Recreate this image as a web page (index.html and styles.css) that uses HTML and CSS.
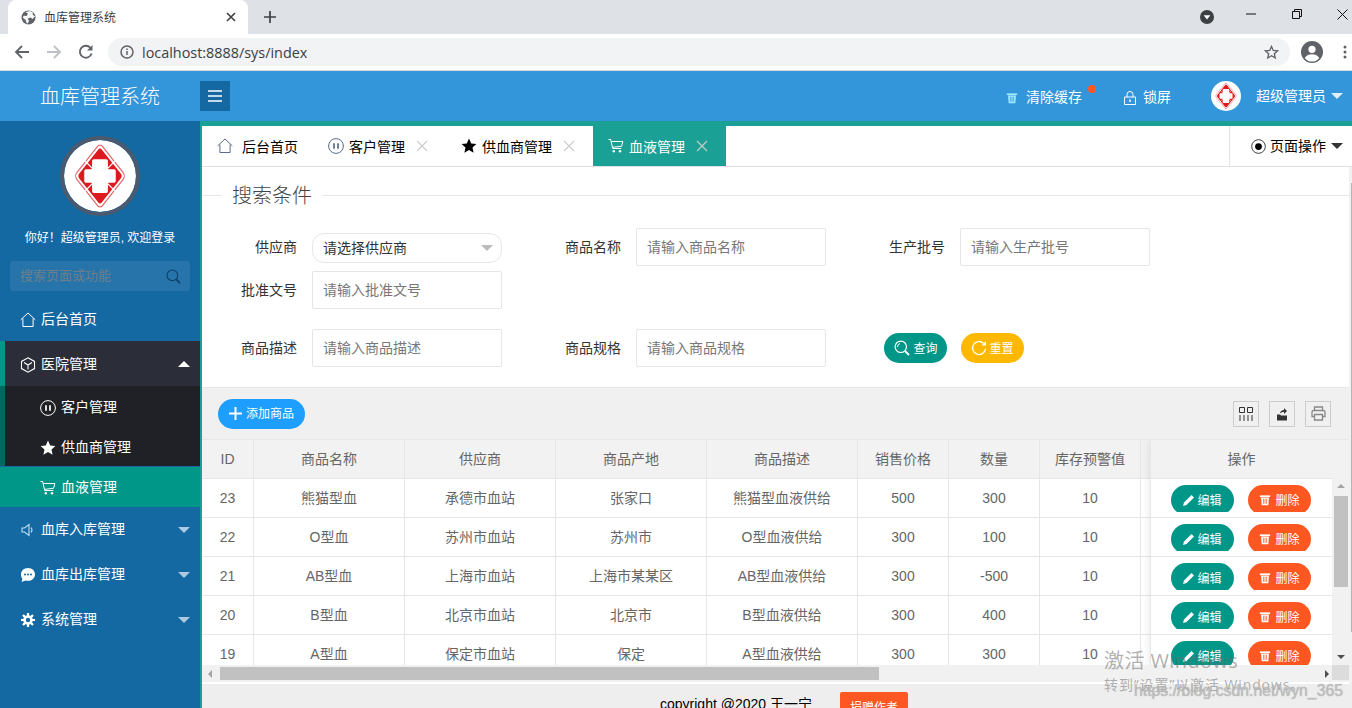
FILE: index.html
```html
<!DOCTYPE html>
<html lang="zh-CN">
<head>
<meta charset="utf-8">
<title>血库管理系统</title>
<link rel="stylesheet" href="styles.css">
</head>
<body>
<svg class="defs" width="0" height="0" aria-hidden="true">
  <symbol id="i-home" viewBox="0 0 16 16"><path d="M.7 7.800 8 1l7.300 6.800M2.900 6.500v8h10.200v-8" fill="none" stroke="currentColor" stroke-width="1"/></symbol>
  <symbol id="i-pause" viewBox="0 0 16 16"><circle cx="8" cy="8" r="7.400" fill="none" stroke="currentColor" stroke-width="1"/><path d="M6 5.200v5.600M10 5.200v5.600" stroke="currentColor" stroke-width="1.700"/></symbol>
  <symbol id="i-star" viewBox="0 0 16 16"><path d="M8 .6l2.200 4.800 5.200.6-3.900 3.500 1.100 5.200L8 12.100l-4.600 2.600 1.100-5.200L.6 6l5.200-.6z" fill="currentColor"/></symbol>
  <symbol id="i-cart" viewBox="0 0 16 16"><path d="M.5 1.500h2.200l2 9h8.600M3.400 3.500h11.400l-1.200 4.800-8.800 1" fill="none" stroke="currentColor" stroke-width="1"/><circle cx="5.800" cy="13.300" r="1.200" fill="currentColor"/><circle cx="12" cy="13.300" r="1.200" fill="currentColor"/></symbol>
  <symbol id="i-close" viewBox="0 0 12 12"><path d="M1 1l10 10M11 1 1 11" stroke="currentColor" stroke-width="1.100"/></symbol>
  <symbol id="i-trash" viewBox="0 0 14 14"><path d="M1 2.600h12" stroke="currentColor" stroke-width="2"/><path d="M2.400 4h9.200l-.7 9H3.100z" fill="currentColor"/><path d="M5.200 5.500v6M7 5.500v6M8.800 5.500v6" stroke="var(--stripe, #fff)" stroke-width=".8"/></symbol>
  <symbol id="i-search" viewBox="0 0 16 16"><circle cx="6.800" cy="6.800" r="5.700" fill="none" stroke="currentColor" stroke-width="1.200"/><path d="M11 11l4 4" stroke="currentColor" stroke-width="1.800"/></symbol>
  <symbol id="i-edit" viewBox="0 0 12 12"><path d="M0 12l1-3.500L8.500 1 11 3.500 3.500 11z" fill="currentColor"/></symbol>
  <symbol id="i-logo" viewBox="0 0 64 64">
    <circle cx="32" cy="32" r="32" fill="#fff"/>
    <g transform="translate(32 32) scale(.79 1) rotate(45)">
      <rect x="-20.500" y="-20.500" width="41" height="41" rx="4" fill="#fff" stroke="#e8666a" stroke-width="1.200"/>
      <rect x="-18" y="-18" width="36" height="36" rx="3" fill="#dc1a1f"/>
    </g>
    <path d="M18 18l8 8M46 18l-8 8M18 46l8-8M46 46l-8-8" stroke="#fff" stroke-width="1"/>
    <path d="M26.500 17h11a1.500 1.500 0 0 1 1.500 1.500V26h5.500a1.500 1.500 0 0 1 1.500 1.500v9a1.500 1.500 0 0 1-1.500 1.500H39v7.500a1.500 1.500 0 0 1-1.500 1.500h-11a1.500 1.500 0 0 1-1.500-1.500V38h-5.500a1.500 1.500 0 0 1-1.500-1.500v-9a1.500 1.500 0 0 1 1.500-1.500H25v-7.500a1.500 1.500 0 0 1 1.500-1.500z" fill="#fff"/>
  </symbol>
</svg>

<div class="page">
  <div class="browser">
    <div class="tabstrip">
      <div class="btab">
        <svg class="globe" width="15" height="15" viewBox="0 0 16 16"><circle cx="8" cy="8" r="7.500" fill="#5f6368"/><path d="M5 2.200 7.400 4 6 6.400 3 6.200 1.800 8 5 10.600l1 3.600h1.500l1-3-1.600-2L10 8l2.500 1.600 2.400-3L12.500 5l.3-2L10 1z" fill="#fff" opacity=".95"/></svg>
        <span class="btab-title">血库管理系统</span>
        <svg class="btab-x" width="10" height="10" viewBox="0 0 10 10"><path d="M1 1l8 8M9 1 1 9" stroke="#3c4043" stroke-width="1.600"/></svg>
      </div>
      <svg class="newtab" width="12" height="12" viewBox="0 0 12 12"><path d="M6 0v12M0 6h12" stroke="#3c4043" stroke-width="1.700"/></svg>
      <div class="winbtns">
        <svg class="dl" width="14" height="14" viewBox="0 0 14 14"><circle cx="7" cy="7" r="7" fill="#3c4043"/><path d="M3.600 5.300h6.800L7 9.600z" fill="#fff"/></svg>
        <svg class="wmin" width="10" height="2" viewBox="0 0 10 2"><path d="M0 1h10" stroke="#111" stroke-width="1"/></svg>
        <svg class="wmax" width="10" height="10" viewBox="0 0 10 10"><path d="M.5 2.500h7v7h-7zM2.500 2.500v-2h7v7h-2" fill="none" stroke="#111" stroke-width="1"/></svg>
        <svg class="wclose" width="11" height="11" viewBox="0 0 11 11"><path d="M.5.500l10 10M10.500.500l-10 10" stroke="#111" stroke-width="1"/></svg>
      </div>
    </div>
    <div class="toolbar">
      <svg class="nav" width="16" height="16" viewBox="0 0 16 16"><path d="M15 8H2M8 2 2 8l6 6" fill="none" stroke="#5f6368" stroke-width="1.800"/></svg>
      <svg class="nav" width="16" height="16" viewBox="0 0 16 16"><path d="M1 8h13M8 2l6 6-6 6" fill="none" stroke="#bdc1c6" stroke-width="1.800"/></svg>
      <svg class="nav" width="16" height="16" viewBox="0 0 16 16"><path d="M13.600 9.500A6 6 0 1 1 12.300 3.700" fill="none" stroke="#5f6368" stroke-width="1.800"/><path d="M14.500 1v5.500H9z" fill="#5f6368"/></svg>
      <div class="omnibox">
        <svg width="14" height="14" viewBox="0 0 14 14"><circle cx="7" cy="7" r="6" fill="none" stroke="#5f6368" stroke-width="1.500"/><path d="M7 6v4M7 3.500v1.500" stroke="#5f6368" stroke-width="1.500"/></svg>
        <span class="url">localhost:8888/sys/index</span>
        <svg class="bstar" width="15" height="15" viewBox="0 0 16 16"><path d="M8 1.500l1.900 4.300 4.600.4-3.500 3.100 1 4.600L8 11.500l-4 2.400 1-4.600L1.500 6.200l4.600-.4z" fill="none" stroke="#5f6368" stroke-width="1.400"/></svg>
      </div>
      <svg class="acct" width="22" height="22" viewBox="0 0 22 22"><circle cx="11" cy="11" r="11" fill="#5f6368"/><circle cx="11" cy="8.300" r="3.600" fill="#fff"/><path d="M3.800 17c1.500-2.800 4.500-3.800 7.200-3.800s5.700 1 7.200 3.800a9 9 0 0 1-14.400 0z" fill="#fff"/></svg>
      <svg class="kebab" width="4" height="14" viewBox="0 0 4 14"><circle cx="2" cy="2" r="1.500" fill="#5f6368"/><circle cx="2" cy="7" r="1.500" fill="#5f6368"/><circle cx="2" cy="12" r="1.500" fill="#5f6368"/></svg>
    </div>
  </div>

  <header class="topbar">
    <div class="brand">血库管理系统</div>
    <button class="burger"><svg width="14" height="12" viewBox="0 0 14 12"><path d="M0 1h14M0 6h14M0 11h14" stroke="#fff" stroke-width="1.700"/></svg></button>
    <div class="top-right">
      <span class="top-item cache"><svg width="12" height="12" class="c-cyan"><use href="#i-trash"/></svg>清除缓存<i class="dot"></i></span>
      <span class="top-item lock"><svg width="12" height="14" viewBox="0 0 12 14"><path d="M.5 6h11v7.500H.5zM3 6V3.500a3 3 0 0 1 6 0V6" fill="none" stroke="#fff" stroke-width="1"/><path d="M6 8.500v2.500" stroke="#fff" stroke-width="1.500"/></svg>锁屏</span>
      <svg class="avatar" width="30" height="30"><use href="#i-logo"/></svg>
      <span class="admin">超级管理员<i class="tri tri-down white"></i></span>
    </div>
  </header>

  <div class="body">
    <aside class="sidebar">
      <svg class="side-logo" width="72" height="72"><use href="#i-logo"/></svg>
      <p class="hello">你好！超级管理员, 欢迎登录</p>
      <div class="side-search"><span>搜索页面或功能</span><svg width="15" height="15" class="c-navy"><use href="#i-search"/></svg></div>
      <nav class="menu">
        <a class="mi home"><svg width="16" height="16"><use href="#i-home"/></svg>后台首页</a>
        <a class="mi open"><svg width="16" height="16" viewBox="0 0 16 16"><path d="M8 .8 14.500 4.400v7.200L8 15.200 1.500 11.600V4.400zM4 5.500l4 2.500 4-2.500M8 8v4.500" fill="none" stroke="#fff" stroke-width="1.100"/></svg>医院管理<i class="tri tri-up white"></i></a>
        <div class="sub">
          <a class="si"><svg width="16" height="16"><use href="#i-pause"/></svg>客户管理</a>
          <a class="si"><svg width="16" height="16"><use href="#i-star"/></svg>供血商管理</a>
        </div>
        <a class="si active"><svg width="16" height="16"><use href="#i-cart"/></svg>血液管理</a>
        <a class="mi"><svg width="16" height="16" viewBox="0 0 16 16"><path d="M2 6h2.500L9 2.500v11L4.500 10H2zM11 5.500c1.200 1.500 1.200 3.500 0 5" fill="none" stroke="#bfe0f4" stroke-width="1.100"/></svg>血库入库管理<i class="tri tri-down pale"></i></a>
        <a class="mi"><svg width="16" height="16" viewBox="0 0 16 16"><path d="M8 1c4 0 7 2.800 7 6.400s-3 6.400-7 6.400c-.9 0-1.800-.1-2.500-.4L1.500 15l1-3C1.500 10.900 1 9.300 1 7.400 1 3.800 4 1 8 1z" fill="#fff"/><circle cx="5" cy="7.500" r="1" fill="#1469a3"/><circle cx="8" cy="7.500" r="1" fill="#1469a3"/><circle cx="11" cy="7.500" r="1" fill="#1469a3"/></svg>血库出库管理<i class="tri tri-down pale"></i></a>
        <a class="mi"><svg width="16" height="16" viewBox="0 0 16 16"><path d="M8 4.500a3.500 3.500 0 1 0 0 7 3.500 3.500 0 0 0 0-7z" fill="none" stroke="#fff" stroke-width="2.600"/><path d="M8 1v3M8 12v3M1 8h3M12 8h3M3 3l2.100 2.100M10.900 10.900 13 13M13 3l-2.100 2.100M5.100 10.900 3 13" stroke="#fff" stroke-width="2.200"/></svg>系统管理<i class="tri tri-down pale"></i></a>
      </nav>
    </aside>

    <main class="main">
      <div class="tabs">
        <a class="tab first"><svg width="16" height="16" class="c-home"><use href="#i-home"/></svg><span>后台首页</span></a>
        <a class="tab"><svg width="16" height="16" class="c-home"><use href="#i-pause"/></svg><span>客户管理</span><svg class="x" width="12" height="12"><use href="#i-close"/></svg></a>
        <a class="tab"><svg width="16" height="16"><use href="#i-star"/></svg><span>供血商管理</span><svg class="x" width="12" height="12"><use href="#i-close"/></svg></a>
        <a class="tab on"><svg width="16" height="16"><use href="#i-cart"/></svg><span>血液管理</span><svg class="x" width="12" height="12"><use href="#i-close"/></svg></a>
        <div class="page-ops"><svg width="15" height="15" viewBox="0 0 16 16"><circle cx="8" cy="8" r="7.300" fill="none" stroke="#333" stroke-width="1"/><circle cx="8" cy="8" r="3.600" fill="#000"/></svg><span>页面操作</span><i class="tri tri-down dark"></i></div>
      </div>

      <div class="content">
        <form class="search">
          <fieldset class="fs">
            <legend>搜索条件</legend>
            <div class="row r1">
              <div class="field"><label>供应商</label><div class="select"><span>请选择供应商</span><i class="tri tri-down grey"></i></div></div>
              <div class="field"><label>商品名称</label><input placeholder="请输入商品名称"></div>
              <div class="field"><label>生产批号</label><input placeholder="请输入生产批号"></div>
            </div>
            <div class="row r2">
              <div class="field"><label>批准文号</label><input placeholder="请输入批准文号"></div>
            </div>
            <div class="row r3">
              <div class="field"><label>商品描述</label><input placeholder="请输入商品描述"></div>
              <div class="field"><label>商品规格</label><input placeholder="请输入商品规格"></div>
              <div class="actions">
                <button type="button" class="pill teal query"><svg width="16" height="16" viewBox="0 0 16 16"><circle cx="6.800" cy="6.800" r="5.700" fill="none" stroke="#fff" stroke-width="1.200"/><path d="M11 11l4 4" stroke="#fff" stroke-width="1.800"/><path d="M3.500 7A3.500 3.500 0 0 1 6 3.500" fill="none" stroke="#fff"/></svg><span>查询</span></button>
                <button type="button" class="pill amber"><svg width="16" height="16" viewBox="0 0 16 16"><path d="M14.500 8.500a6.500 6.500 0 1 1-2-5.200" fill="none" stroke="#fff" stroke-width="1.300"/><path d="M15 1v4.500h-4.500z" fill="#fff"/></svg><span>重置</span></button>
              </div>
            </div>
          </fieldset>
        </form>

        <div class="tools">
          <button class="pill blue"><svg width="13" height="13" viewBox="0 0 13 13"><path d="M6.500 0v13M0 6.500h13" stroke="#fff" stroke-width="2"/></svg><span>添加商品</span></button>
          <div class="tool-icons">
            <span class="ti"><svg width="14" height="14" viewBox="0 0 14 14"><path d="M.5.500h5v5h-5zM8.500.500h5v5h-5zM1 8v6M5 8v6M9 8v6M13 8v6" fill="none" stroke="#333" stroke-width="1"/></svg></span>
            <span class="ti"><svg width="14" height="14" viewBox="0 0 14 14"><path d="M2 7.500h3l1 1h6v5H2z" fill="#333"/><path d="M5 6.500C5 4.500 7 3 9 3V1l3 3-3 3V5C7 5 6 5.500 5 6.500z" fill="#333"/></svg></span>
            <span class="ti"><svg width="15" height="15" viewBox="0 0 15 15"><path d="M3.500 4.500V1h8v3.500M3.500 10.500H1V6a1.500 1.500 0 0 1 1.500-1.500h10A1.500 1.500 0 0 1 14 6v4.500h-2.500M3.500 8.500h8v5.500h-8z" fill="none" stroke="#888" stroke-width="1.300"/></svg></span>
          </div>
        </div>

        <div class="grid">
          <table class="tbl">
            <colgroup><col class="c-id"><col class="c-w"><col class="c-w"><col class="c-w"><col class="c-w"><col class="c-n"><col class="c-n"><col class="c-s"><col class="c-l"></colgroup>
            <thead><tr><th>ID</th><th>商品名称</th><th>供应商</th><th>商品产地</th><th>商品描述</th><th>销售价格</th><th>数量</th><th>库存预警值</th><th></th></tr></thead>
            <tbody>
              <tr><td>23</td><td>熊猫型血</td><td>承德市血站</td><td>张家口</td><td>熊猫型血液供给</td><td>500</td><td>300</td><td>10</td><td></td></tr>
              <tr><td>22</td><td>O型血</td><td>苏州市血站</td><td>苏州市</td><td>O型血液供给</td><td>300</td><td>100</td><td>10</td><td></td></tr>
              <tr><td>21</td><td>AB型血</td><td>上海市血站</td><td>上海市某某区</td><td>AB型血液供给</td><td>300</td><td>-500</td><td>10</td><td></td></tr>
              <tr><td>20</td><td>B型血</td><td>北京市血站</td><td>北京市</td><td>B型血液供给</td><td>300</td><td>400</td><td>10</td><td></td></tr>
              <tr><td>19</td><td>A型血</td><td>保定市血站</td><td>保定</td><td>A型血液供给</td><td>300</td><td>300</td><td>10</td><td></td></tr>
            </tbody>
          </table>
          <div class="fixed">
            <div class="fixed-head">操作</div>
            <div class="fixed-row"><div class="ops"><button class="pill teal"><svg width="12" height="12"><use href="#i-edit"/></svg><span>编辑</span></button><button class="pill red"><svg width="12" height="12"><use href="#i-trash"/></svg><span>删除</span></button></div></div>
            <div class="fixed-row"><div class="ops"><button class="pill teal"><svg width="12" height="12"><use href="#i-edit"/></svg><span>编辑</span></button><button class="pill red"><svg width="12" height="12"><use href="#i-trash"/></svg><span>删除</span></button></div></div>
            <div class="fixed-row"><div class="ops"><button class="pill teal"><svg width="12" height="12"><use href="#i-edit"/></svg><span>编辑</span></button><button class="pill red"><svg width="12" height="12"><use href="#i-trash"/></svg><span>删除</span></button></div></div>
            <div class="fixed-row"><div class="ops"><button class="pill teal"><svg width="12" height="12"><use href="#i-edit"/></svg><span>编辑</span></button><button class="pill red"><svg width="12" height="12"><use href="#i-trash"/></svg><span>删除</span></button></div></div>
            <div class="fixed-row"><div class="ops"><button class="pill teal"><svg width="12" height="12"><use href="#i-edit"/></svg><span>编辑</span></button><button class="pill red"><svg width="12" height="12"><use href="#i-trash"/></svg><span>删除</span></button></div></div>
          </div>
          <div class="vscroll"><i class="arr-up"></i><b class="vthumb"></b><i class="arr-down"></i></div>
        </div>
        <div class="hscroll"><i class="arr-left"></i><b class="hthumb"></b><i class="arr-right"></i><span class="corner"></span></div>
        <div class="gap"></div>
        <footer class="foot"><span>copyright @2020 王一宁</span><button class="donate">捐赠作者</button></footer>
        <div class="outer-scroll"><b></b></div>
      </div>
    </main>
  </div>

  <div class="watermark">
    <div class="wm1">激活 Windows</div>
    <div class="wm2">转到“设置”以激活 Windows。</div>
    <div class="wm3">https://blog.csdn.net/wyn_365</div>
  </div>
</div>
</body>
</html>
```
FILE: styles.css
```css
* { box-sizing: border-box; }
html, body { margin: 0; padding: 0; height: 100%; overflow: hidden; }
body { font: 14px/1.4 "Liberation Sans", "Noto Sans CJK SC", sans-serif; color: #333; }
.defs { position: absolute; }
button { font-family: inherit; border: 0; padding: 0; }
a { display: block; }
i { display: block; font-style: normal; }
.page { position: relative; height: 708px; display: flex; flex-direction: column; overflow: hidden; }

/* browser chrome */
.browser { flex: none; height: 71px; }
.tabstrip { height: 34px; background: #dee1e6; display: flex; align-items: flex-start; padding-left: 8px; }
.btab { width: 240px; height: 34px; background: #fff; border-radius: 8px 8px 0 0; display: flex; align-items: center; padding: 0 12px 0 13px; }
.globe { margin-right: 8px; }
.btab-title { flex: 1; font-size: 12px; color: #3c4043; margin-top: 3px; }
.newtab { margin: 11px 0 0 16px; }
.winbtns { margin-left: auto; display: flex; align-items: center; height: 30px; }
.dl { margin: 4px 32px 0 0; }
.wmin { margin: -2px 36px 0 0; }
.wmax { margin: -2px 35px 0 0; }
.wclose { margin: -2px 4px 0 0; }
.toolbar { height: 37px; background: #fff; display: flex; align-items: center; padding-left: 14px; border-bottom: 1px solid #d8dade; }
.nav { margin-right: 16px; }
.omnibox { width: 1182px; height: 28px; background: #f1f3f4; border-radius: 14px; display: flex; align-items: center; padding: 0 11px 0 12px; margin-left: -2px; }
.url { font: 14.4px "Open Sans", "Noto Sans", sans-serif; color: #3c4043; margin-left: 8px; flex: 1; }
.acct { margin-left: 11px; }
.kebab { margin-left: 20px; }

/* top bar */
.topbar { flex: none; height: 50px; background: #3395da; display: flex; align-items: center; }
.brand { width: 200px; padding: 2px 0 0 40px; font-size: 20px; color: #fff; font-weight: 300; }
.burger { width: 30px; height: 30px; background: #1469a3; display: flex; align-items: center; justify-content: center; }
.top-right { margin-left: auto; display: flex; align-items: center; color: #fff; padding-right: 9px; }
.top-item { display: flex; align-items: center; gap: 7px; position: relative; padding-top: 4px; }
.c-cyan { color: #9feafc; --stripe: #3395da; }
.cache { margin-right: 42px; gap: 8px; }
.dot { position: absolute; width: 8px; height: 8px; border-radius: 50%; background: #ff5722; right: -14px; top: 1px; }
.lock { margin-right: 40px; }
.avatar { display: block; }
.admin { margin-left: 15px; display: flex; align-items: center; padding-top: 2px; }
.tri { width: 0; height: 0; border-left: 6px solid transparent; border-right: 6px solid transparent; }
.tri-down { border-top: 6px solid currentColor; }
.tri-up { border-bottom: 6px solid currentColor; }
.white { color: #fff; }
.pale { color: rgba(255, 255, 255, .65); }
.dark { color: #333; }
.grey { color: #bbb; }
.admin .tri { margin-left: 5px; margin-top: -2px; color: rgba(255, 255, 255, .85); }

/* body */
.body { flex: 1; display: flex; min-height: 0; }
.sidebar { width: 200px; flex: none; background: #1469a3; color: #fff; padding-top: 15px; }
.side-logo { display: block; margin: 0 auto; width: 80px; height: 80px; border: 4px solid #4b5a6e; border-radius: 50%; }
.hello { margin: 12px 0 0; font-size: 12px; line-height: 20px; text-align: center; }
.side-search { margin: 13px 10px 5px; height: 30px; border-radius: 2px; background: rgba(255, 255, 255, .08); padding: 0 9px 0 10px; display: flex; align-items: center; justify-content: space-between; font-size: 13px; color: #6e7f8a; }
.c-navy { color: #0f3e6b; }
.mi { height: 45px; display: flex; align-items: center; padding-left: 20px; gap: 5px; position: relative; color: #fff; }
.mi.home { padding-top: 2px; }
.mi .tri { position: absolute; right: 10px; top: 20px; }
.open { background: #2b2e39; border-left: 5px solid #009688; padding-left: 15px; padding-top: 2px; }
.sub { background: #202127; border-left: 5px solid #00695f; }
.si { height: 40px; display: flex; align-items: center; padding-left: 35px; padding-top: 4px; gap: 5px; color: #fff; }
.sub + .si { margin-top: 1px; }
.active { background: #009688; padding-left: 40px; padding-top: 2px; }

/* main */
.main { flex: 1; min-width: 0; border-left: 2px solid #1aa094; display: flex; flex-direction: column; background: #fff; }
.tabs { flex: none; height: 46px; border-top: 5px solid #1aa094; border-bottom: 1px solid #e2e2e2; display: flex; align-items: stretch; color: #000; }
.tab { display: flex; align-items: center; padding: 0 18px 0 15px; gap: 5px; }
.tab span { padding-top: 3px; }
.page-ops span { padding-top: 1px; }
.tab.first { padding: 0 15px; gap: 9px; }
.c-home { color: #5a6b8c; }
.tab .x { margin-left: 6px; color: #ccc; }
.tab.on { background: #1aa094; color: #fff; }
.page-ops { margin-left: auto; width: 123px; border-left: 1px solid #e2e2e2; display: flex; align-items: center; padding-left: 21px; gap: 4px; }
.page-ops .tri { margin-left: 1px; margin-top: -1px; }

.content { flex: 1; min-height: 0; overflow: hidden; display: flex; flex-direction: column; position: relative; }
.search { flex: none; height: 220px; margin-right: 3px; }
.fs { margin: 13px 0 0; padding: 0; border: 0; border-top: 1px solid #e6e6e6; }
.fs legend { margin-left: 20px; padding: 2px 10px 0; font-size: 20px; line-height: 28px; color: #444; font-weight: 300; }
.row { display: flex; }
.r1 { margin-top: 18px; }
.r2 { margin-top: 5px; }
.r3 { margin-top: 20px; }
.field { width: 300px; margin-right: 24px; display: flex; align-items: center; }
.field label { width: 95px; margin-right: 15px; padding-top: 2px; text-align: right; color: #333; font-size: 14px; }
.field input { width: 190px; height: 38px; border: 1px solid #e6e6e6; border-radius: 2px; padding: 0 10px; font: 14px "Liberation Sans", "Noto Sans CJK SC", sans-serif; }
.field input::placeholder { color: #777; opacity: 1; }
.select { width: 190px; height: 30px; border: 1px solid #e6e6e6; border-radius: 12px; padding: 0 8px 0 10px; display: flex; align-items: center; justify-content: space-between; margin-top: 1px; color: #333; }
.select span { padding-top: 2px; }
.actions { margin-left: 34px; display: flex; gap: 14px; align-items: center; }
.pill { width: 63px; height: 30px; border-radius: 15px; color: #fff; font-size: 12px; display: flex; align-items: center; justify-content: center; gap: 2px; }
.pill span { padding-bottom: 2px; }
.query { gap: 3px; padding-left: 1px; }
.teal { background: #009688; }
.amber { background: #ffb800; }
.blue { background: #1e9fff; width: 87px; gap: 4px; }
.red { background: #ff5722; gap: 4px; --stripe: #ff5722; }
.tools { flex: none; height: 53px; background: #f0f0f0; border-top: 1px solid #e6e6e6; border-bottom: 1px solid #e6e6e6; display: flex; align-items: center; justify-content: space-between; padding: 0 18px 0 16px; margin-right: 3px; }
.tool-icons { display: flex; gap: 10px; }
.ti { width: 26px; height: 26px; border: 1px solid #ccc; display: flex; align-items: center; justify-content: center; }

.grid { flex: none; height: 225px; position: relative; overflow: hidden; margin-right: 3px; }
.tbl { border-collapse: separate; border-spacing: 0; table-layout: fixed; width: 1240px; color: #666; }
.c-id { width: 52px; }
.c-w { width: 151px; }
.c-n { width: 91px; }
.c-s { width: 101px; }
.c-l { width: 301px; }
.tbl th, .tbl td { height: 39px; padding: 2px 0 0; border-right: 1px solid #e6e6e6; border-bottom: 1px solid #e6e6e6; text-align: center; font-weight: 400; }
.tbl th { background: #f2f2f2; }
.fixed { position: absolute; top: 0; left: 948px; width: 199px; background: #fff; box-shadow: -1px 0 8px rgba(0, 0, 0, .08); color: #666; }
.fixed-head { height: 39px; padding: 2px 17px 0 0; background: #f2f2f2; border-bottom: 1px solid #e6e6e6; border-left: 1px solid #e6e6e6; display: flex; align-items: center; justify-content: center; }
.fixed-row { height: 39px; border-bottom: 1px solid #e6e6e6; border-left: 1px solid #e6e6e6; padding: 6px 0 0 20px; }
.ops { height: 27px; overflow: hidden; display: flex; gap: 14px; }
.vscroll { position: absolute; right: 0; top: 38px; bottom: 0; width: 17px; background: #f1f1f1; }
.vthumb { display: block; position: absolute; left: 2px; right: 1px; top: 18px; height: 91px; background: #c1c1c1; }
.arr-up, .arr-down, .arr-left, .arr-right { position: absolute; width: 0; height: 0; }
.arr-up { top: 6px; left: 5px; border: 4px solid transparent; border-top: 0; border-bottom: 4px solid #a3a3a3; }
.arr-down { bottom: 6px; left: 5px; border: 4px solid transparent; border-bottom: 0; border-top: 4px solid #505050; }
.hscroll { flex: none; height: 17px; background: #f1f1f1; position: relative; margin-right: 3px; }
.hthumb { display: block; position: absolute; left: 18px; top: 2px; width: 659px; height: 13px; background: #c1c1c1; }
.arr-left { left: 6px; top: 5px; border: 4px solid transparent; border-left: 0; border-right: 4px solid #a3a3a3; }
.arr-right { right: 20px; top: 5px; border: 4px solid transparent; border-right: 0; border-left: 4px solid #505050; }
.corner { position: absolute; right: 0; top: 0; width: 17px; height: 15px; background: #dcdcdc; }
.gap { flex: none; height: 2px; background: #fff; }
.foot { flex: 1; background: #eee; display: flex; padding: 8px 0 0 458px; gap: 28px; color: #000; }
.foot span { line-height: 24px; }
.donate { width: 68px; height: 28px; background: #ff5722; color: #fff; font-size: 12px; border-radius: 2px; }
.outer-scroll { position: absolute; top: 0; right: 0; width: 3px; height: 517px; background: #f1f1f1; }
.outer-scroll b { display: block; position: absolute; right: 0; top: 16px; width: 1px; height: 449px; background: #b5b5b5; }

/* activation watermark */
.watermark { position: absolute; left: 1104px; top: 648px; color: rgba(110, 110, 110, .55); pointer-events: none; white-space: nowrap; }
.wm1 { font: 20px/26px "Open Sans", "Noto Sans CJK SC", sans-serif; letter-spacing: .4px; }
.wm2 { font: 14px/22px "Open Sans", "Noto Sans CJK SC", sans-serif; letter-spacing: .9px; }
.wm3 { position: absolute; left: 30px; top: 33px; font: 15.800px/20px "Liberation Sans", sans-serif; letter-spacing: 0; color: rgba(200, 200, 200, .7); text-shadow: 0 0 1px #999; }
```
